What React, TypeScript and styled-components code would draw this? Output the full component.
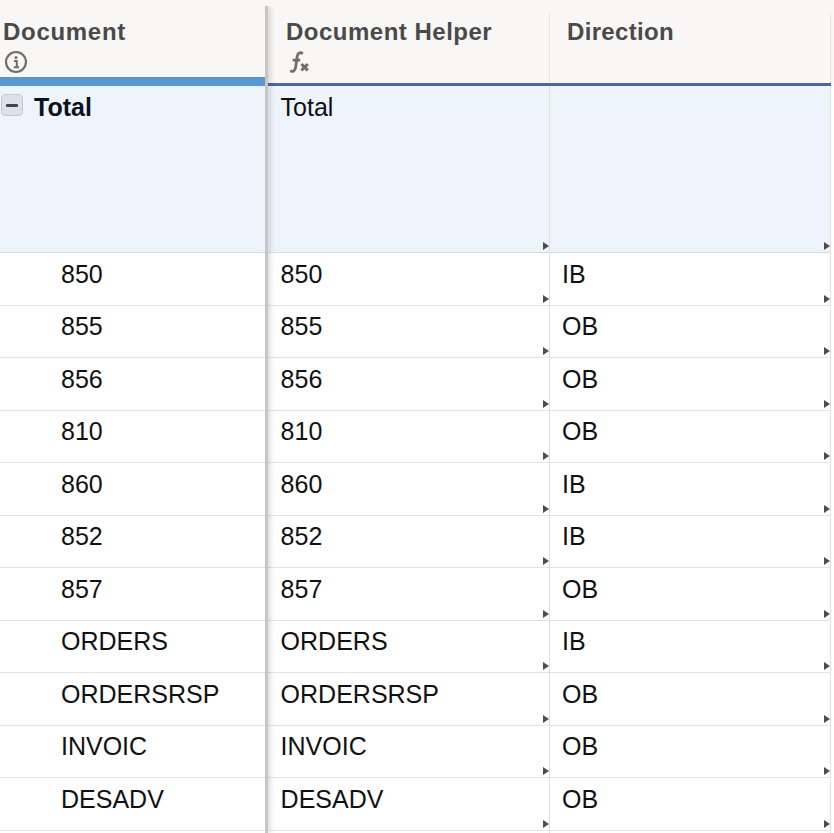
import React from "react";
import styled, { createGlobalStyle } from "styled-components";

const GlobalStyle = createGlobalStyle`
  html, body {
    margin: 0;
    height: 100%;
    overflow: hidden;
    background: #fff;
    font-family: "Liberation Sans", Arial, sans-serif;
  }
`;

const Sheet = styled.div`
  display: flex;
  width: 834px;
  height: 833px;
  overflow: hidden;
  background: linear-gradient(#f8f7f5 0, #f8f7f5 86px, #fff 86px);
`;

const FrozenPane = styled.div`
  flex: none;
  width: 265px;
  margin-top: 6px;
  border-right: 3px solid #c6c6c6;
  box-shadow: 3px 0 5px rgba(0, 0, 0, 0.12);
  clip-path: inset(0 -10px 0 0);
  position: relative;
  z-index: 1;
`;

const ScrollPane = styled.div`
  flex: none;
  width: 563px;
`;

const FrozenHeader = styled.div`
  box-sizing: border-box;
  height: 80px;
  padding: 12px 0 0 3px;
  background: #f8f7f5;
  border-bottom: 9px solid #5b96d5;
`;

const HeaderRow = styled.div`
  box-sizing: border-box;
  display: grid;
  grid-template-columns: 282px 281px;
  height: 86px;
  padding-top: 13px;
  border-bottom: 3px solid #4f659f;
`;

const HeaderCell = styled.div<{ $inset: number }>`
  padding: 5px 0 0 ${(p) => p.$inset}px;
  border-right: 1px solid #e4e3e1;
`;

const HeaderTitle = styled.div<{ $tracking: number }>`
  font-size: 24px;
  line-height: 28px;
  font-weight: 700;
  letter-spacing: ${(p) => p.$tracking}px;
  color: #4a4a4a;
  white-space: nowrap;
`;

const HeaderIcon = styled.svg`
  display: block;
  width: 24px;
  height: 24px;
  margin-top: 4px;
  color: #6e6e6e;
`;

const Row = styled.div<{ $total?: boolean }>`
  box-sizing: border-box;
  display: flex;
  height: ${(p) => (p.$total ? "167px" : "52.5px")};
  background: ${(p) => (p.$total ? "#eef4fc" : "#fff")};
  border-bottom: 1px solid ${(p) => (p.$total ? "#d6dce6" : "#e3e3e3")};
`;

const FrozenCell = styled.div<{ $total?: boolean }>`
  display: flex;
  align-items: flex-start;
  gap: 11px;
  padding: ${(p) => (p.$total ? "7px 0 0 1px" : "6.9px 0 0 61px")};
  font-size: 25px;
  line-height: 29px;
  color: #111;
  white-space: nowrap;
`;

const TotalLabel = styled.span`
  font-weight: 700;
  color: #0b1220;
`;

const CollapseBox = styled.span`
  flex: none;
  box-sizing: border-box;
  display: flex;
  align-items: center;
  justify-content: center;
  width: 22px;
  height: 22px;
  margin-top: 1px;
  border: 1px solid #c3cad4;
  border-radius: 4px;
  background: #dbe1e9;
  &::before {
    content: "";
    width: 12px;
    height: 3px;
    border-radius: 1px;
    background: #3f4650;
  }
`;

const Cell = styled.div<{ $width: number; $inset: number }>`
  flex: none;
  box-sizing: border-box;
  position: relative;
  width: ${(p) => p.$width}px;
  padding: 6.9px 0 0 ${(p) => p.$inset}px;
  border-right: 1px solid #e0e0e0;
  font-size: 25px;
  line-height: 29px;
  color: #111;
  white-space: nowrap;
  &::after {
    content: "";
    position: absolute;
    right: 0;
    bottom: 2px;
    border-left: 6px solid #4d4d4d;
    border-top: 4px solid transparent;
    border-bottom: 4px solid transparent;
  }
`;

const rows = [
  ["850", "IB"],
  ["855", "OB"],
  ["856", "OB"],
  ["810", "OB"],
  ["860", "IB"],
  ["852", "IB"],
  ["857", "OB"],
  ["ORDERS", "IB"],
  ["ORDERSRSP", "OB"],
  ["INVOIC", "OB"],
  ["DESADV", "OB"],
  ["", ""],
];

const InfoIcon = () => (
  <HeaderIcon viewBox="0 0 24 24" fill="none">
    <circle cx="13" cy="12" r="10" stroke="currentColor" strokeWidth="2.2" />
    <circle cx="13" cy="7.6" r="1.5" fill="currentColor" />
    <path d="M11 11h2.8v6M10.8 17.2h5.2" stroke="currentColor" strokeWidth="2" />
  </HeaderIcon>
);

const FxIcon = () => (
  <HeaderIcon viewBox="0 0 24 24" fill="none">
    <path
      d="M17 3.4c-3-1.4-5.2-.4-5.8 2.8L9.6 17.6c-.6 3.4-2.6 4.4-5.4 3.2M6.6 10.2h7.6"
      stroke="currentColor"
      strokeWidth="2.8"
    />
    <path d="M15.4 14l6.4 6.4M21.8 14l-6.4 6.4" stroke="currentColor" strokeWidth="3" />
  </HeaderIcon>
);

const App = () => {
  return (
    <>
      <GlobalStyle />
      <Sheet>
        <FrozenPane>
          <FrozenHeader>
            <HeaderTitle $tracking={0.7}>Document</HeaderTitle>
            <InfoIcon />
          </FrozenHeader>
          <Row $total>
            <FrozenCell $total>
              <CollapseBox />
              <TotalLabel>Total</TotalLabel>
            </FrozenCell>
          </Row>
          {rows.map((r, i) => (
            <Row key={i}>
              <FrozenCell>{r[0]}</FrozenCell>
            </Row>
          ))}
        </FrozenPane>
        <ScrollPane>
          <HeaderRow>
            <HeaderCell $inset={18}>
              <HeaderTitle $tracking={0.5}>Document Helper</HeaderTitle>
              <FxIcon />
            </HeaderCell>
            <HeaderCell $inset={17}>
              <HeaderTitle $tracking={0.33}>Direction</HeaderTitle>
            </HeaderCell>
          </HeaderRow>
          <Row $total>
            <Cell $width={282} $inset={12.6}>Total</Cell>
            <Cell $width={281} $inset={12} />
          </Row>
          {rows.map((r, i) => (
            <Row key={i}>
              <Cell $width={282} $inset={12.6}>{r[0]}</Cell>
              <Cell $width={281} $inset={12}>{r[1]}</Cell>
            </Row>
          ))}
        </ScrollPane>
      </Sheet>
    </>
  );
};

export default App;
